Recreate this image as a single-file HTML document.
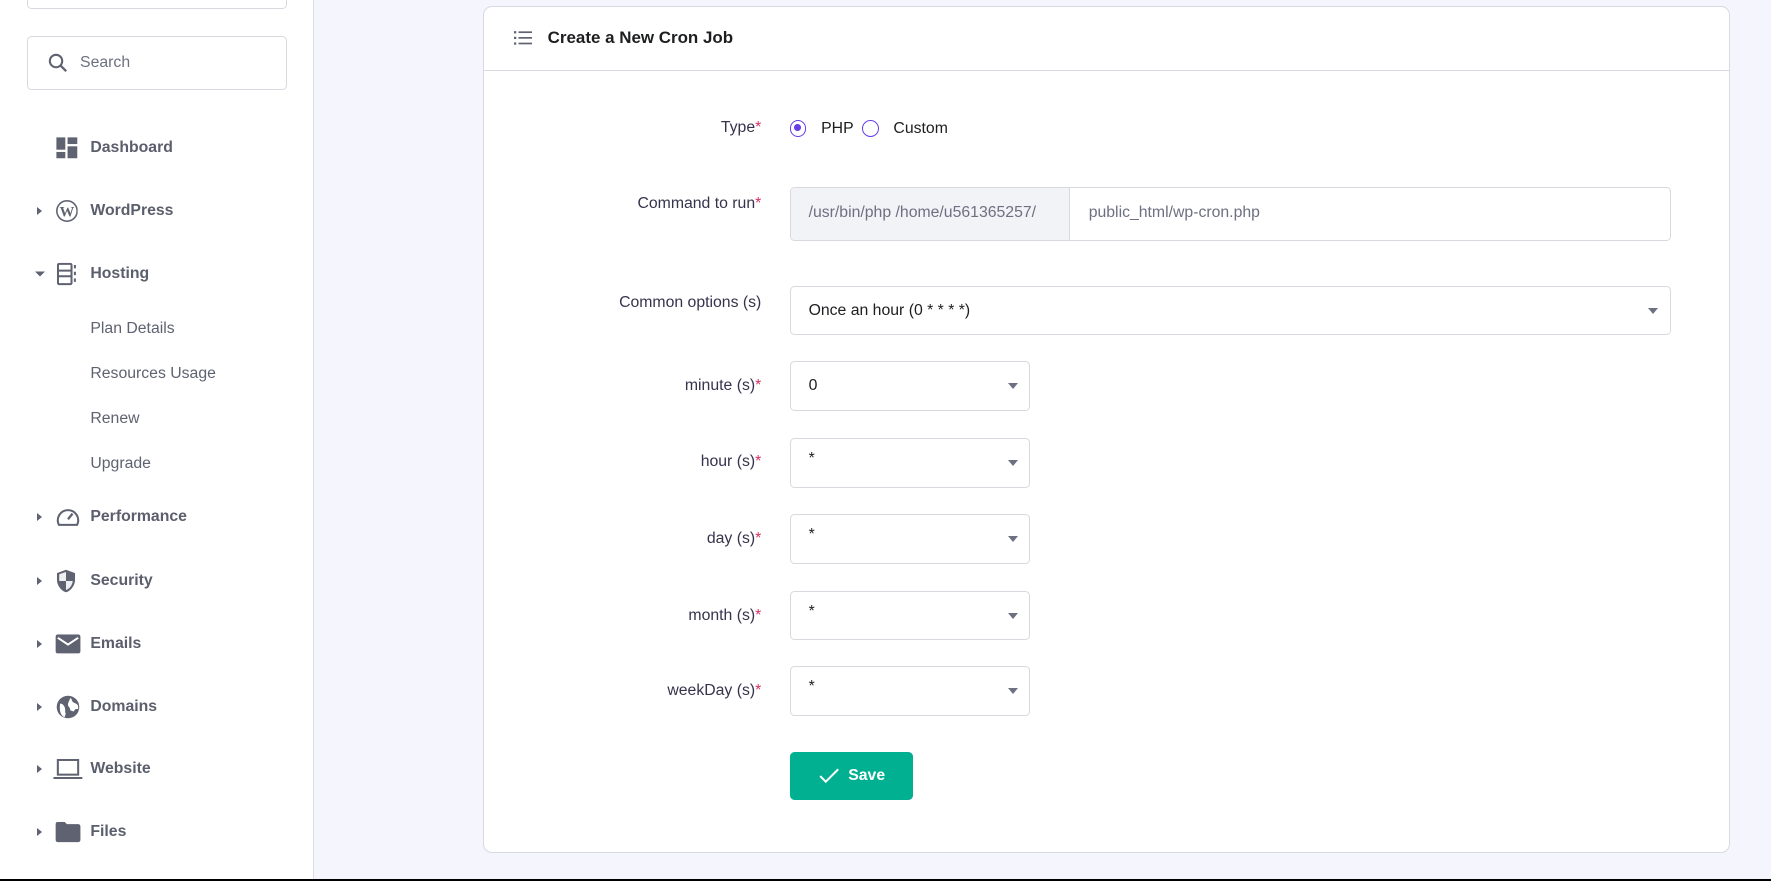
<!DOCTYPE html>
<html><head><meta charset="utf-8">
<style>
*{box-sizing:border-box;margin:0;padding:0}
html,body{width:1771px;height:881px;overflow:hidden;background:#f4f5fd}
#w{zoom:1.1295;width:1568px;height:780px;position:relative;font-family:"Liberation Sans",sans-serif;background:#f4f5fd;overflow:hidden}
.sb{position:absolute;left:0;top:0;width:278px;height:780px;background:#fff;border-right:1px solid #dcdce2}
.box{position:absolute;border:1px solid #d8d9de;border-radius:4px;background:#fff}
.nav{position:absolute;left:80px;font-size:14px;color:#5f6270;transform:translateY(-50%)}
.nav.b{font-weight:bold;color:#5b5e6c}
.ic{position:absolute;transform:translate(-50%,-50%)}
.ar{position:absolute;left:33px;width:0;height:0;border-top:4px solid transparent;border-bottom:4px solid transparent;border-left:5px solid #5f6270;transform:translateY(-50%)}
.ard{position:absolute;left:31px;width:0;height:0;border-left:4.5px solid transparent;border-right:4.5px solid transparent;border-top:5px solid #5f6270;transform:translateY(-50%)}
.card{position:absolute;left:428px;top:5px;width:1104px;height:750px;background:#fff;border:1px solid #d9dae0;border-radius:8px}
.hd{position:absolute;left:0;top:0;right:0;height:57px;border-bottom:1px solid #d9dae0}
.lbl{position:absolute;font-size:14px;color:#36344d;transform:translateY(-50%);white-space:nowrap}
.lbl i{font-style:normal;color:#d63163}
.in{position:absolute;border:1px solid #d8d9de;border-radius:4px;background:#fff;font-size:14px;color:#1d1e20}
.car{position:absolute;right:10px;top:50%;width:0;height:0;border-left:5px solid transparent;border-right:5px solid transparent;border-top:6px solid #6d7081;transform:translateY(-50%)}
.sel .t{position:absolute;left:16px;top:50%;transform:translateY(-50%)}
</style></head><body><div id="w">
<div class="sb">
  <div class="box" style="left:24px;top:-10px;width:230px;height:18px"></div>
  <div class="box" style="left:24px;top:32px;width:230px;height:48px">
    <svg style="position:absolute;left:17px;top:13px" width="20" height="20" viewBox="0 0 20 20"><circle cx="8" cy="8" r="5.5" fill="none" stroke="#5f6270" stroke-width="1.8"/><path d="M12 12l5 5" stroke="#5f6270" stroke-width="2"/></svg>
    <span style="position:absolute;left:46px;top:15px;font-size:14px;color:#6d7081">Search</span>
  </div>
  <svg class="ic" style="left:59px;top:131px" width="19" height="19" viewBox="0 0 19 19" fill="#5f6270"><rect x="0" y="0" width="8" height="11"/><rect x="10" y="0" width="9" height="6"/><rect x="0" y="13" width="8" height="6"/><rect x="10" y="8" width="9" height="11"/></svg>
  <div class="nav b" style="top:131px">Dashboard</div>
  <div class="ar" style="top:187px"></div>
  <svg class="ic" style="left:59px;top:187px" width="20" height="20" viewBox="0 0 20 20"><circle cx="10" cy="10" r="9" fill="none" stroke="#5f6270" stroke-width="1.4"/><text x="10" y="15" font-size="13" font-weight="bold" text-anchor="middle" fill="#5f6270" font-family="Liberation Serif">W</text></svg>
  <div class="nav b" style="top:187px">WordPress</div>
  <div class="ard" style="top:243px"></div>
  <svg class="ic" style="left:59px;top:243px" width="18" height="20" viewBox="0 0 18 20" fill="none" stroke="#5f6270" stroke-width="1.8"><rect x="1" y="1" width="12" height="18" rx="1"/><path d="M1 7h12M1 12h12M16 2v3M16 8v3M16 14v3"/></svg>
  <div class="nav b" style="top:243px">Hosting</div>
  <div class="nav" style="top:291px">Plan Details</div>
  <div class="nav" style="top:331px">Resources Usage</div>
  <div class="nav" style="top:371px">Renew</div>
  <div class="nav" style="top:411px">Upgrade</div>
  <div class="ar" style="top:458px"></div>
  <svg class="ic" style="left:60px;top:458px" width="22" height="18" viewBox="0 0 22 18" fill="none" stroke="#5f6270" stroke-width="1.8"><path d="M3 16A9 9 0 1 1 19 16z"/><path d="M11 11l4-5" stroke-width="2"/></svg>
  <div class="nav b" style="top:458px">Performance</div>
  <div class="ar" style="top:514px"></div>
  <svg class="ic" style="left:58px;top:514px" width="18" height="22" viewBox="0 0 18 22"><path d="M9 1L1 4v6c0 5 4 10 8 11 4-1 8-6 8-11V4z" fill="#5f6270"/><path d="M9 3v8H3V5zM9 11h6c-0.5 4-3 7-6 8z" fill="#fff" opacity=".9"/></svg>
  <div class="nav b" style="top:514px">Security</div>
  <div class="ar" style="top:570px"></div>
  <svg class="ic" style="left:60px;top:570px" width="22" height="17" viewBox="0 0 22 17"><rect width="22" height="17" rx="2" fill="#5f6270"/><path d="M2 3l9 6 9-6" fill="none" stroke="#fff" stroke-width="1.8"/></svg>
  <div class="nav b" style="top:570px">Emails</div>
  <div class="ar" style="top:626px"></div>
  <svg class="ic" style="left:60px;top:626px" width="22" height="22" viewBox="0 0 22 22"><circle cx="11" cy="11" r="10" fill="#5f6270"/><path d="M4 8c2 0 3 1 4 3s0 4 1 6l-1 3C5 19 3 15 4 8zM13 3c2 1 1 3 3 4s3 1 4 3v3c-2-1-3 0-4 2l-3-1c0-3-2-3-2-5s1-3 2-6z" fill="#fff"/></svg>
  <div class="nav b" style="top:626px">Domains</div>
  <div class="ar" style="top:681px"></div>
  <svg class="ic" style="left:60px;top:681px" width="26" height="18" viewBox="0 0 26 18" fill="none" stroke="#5f6270" stroke-width="1.8"><rect x="4" y="1" width="18" height="13"/><path d="M0 17h26"/></svg>
  <div class="nav b" style="top:681px">Website</div>
  <div class="ar" style="top:737px"></div>
  <svg class="ic" style="left:60px;top:737px" width="22" height="18" viewBox="0 0 22 18"><path d="M0 2a2 2 0 0 1 2-2h6l2 2h10a2 2 0 0 1 2 2v12a2 2 0 0 1-2 2H2a2 2 0 0 1-2-2z" fill="#5f6270"/></svg>
  <div class="nav b" style="top:737px">Files</div>
</div>

<div class="card">
  <div class="hd">
    <svg style="position:absolute;left:26px;top:21px" width="16" height="14" viewBox="0 0 16 14" fill="#5f6270"><rect x="0" y="1" width="2" height="2"/><rect x="4" y="1.2" width="12" height="1.5"/><rect x="0" y="6" width="2" height="2"/><rect x="4" y="6.2" width="12" height="1.5"/><rect x="0" y="11" width="2" height="2"/><rect x="4" y="11.2" width="12" height="1.5"/></svg>
    <span style="position:absolute;left:56px;top:19px;font-size:15px;font-weight:bold;color:#1d1e20">Create a New Cron Job</span>
  </div>
</div>
<div style="position:absolute;left:0;top:0;width:1532px;height:780px">
<div class="lbl" style="right:858px;top:113px">Type<i>*</i></div>
<div class="lbl" style="right:858px;top:181px">Command to run<i>*</i></div>
<div class="lbl" style="right:858px;top:268px">Common options (s)</div>
<div class="lbl" style="right:858px;top:342px">minute (s)<i>*</i></div>
<div class="lbl" style="right:858px;top:409px">hour (s)<i>*</i></div>
<div class="lbl" style="right:858px;top:477px">day (s)<i>*</i></div>
<div class="lbl" style="right:858px;top:545px">month (s)<i>*</i></div>
<div class="lbl" style="right:858px;top:612px">weekDay (s)<i>*</i></div>
</div>

<div style="position:absolute;left:699px;top:106px;width:15px;height:15px;border:1.5px solid #673de6;border-radius:50%"><div style="position:absolute;left:3px;top:3px;width:6px;height:6px;border-radius:50%;background:#673de6"></div></div>
<span style="position:absolute;left:727px;top:106px;font-size:14px;color:#1d1e20">PHP</span>
<div style="position:absolute;left:763px;top:106px;width:15px;height:15px;border:1.5px solid #673de6;border-radius:50%"></div>
<span style="position:absolute;left:791px;top:106px;font-size:14px;color:#1d1e20">Custom</span>

<div class="in" style="left:699px;top:166px;width:780px;height:47px;overflow:hidden">
  <div style="position:absolute;left:0;top:0;width:247px;height:100%;background:#f2f3f6;border-right:1px solid #d8d9de"></div>
  <span style="position:absolute;left:16px;top:14px;color:#6d7081">/usr/bin/php /home/u561365257/</span>
  <span style="position:absolute;left:264px;top:14px;color:#6d7081">public_html/wp-cron.php</span>
</div>
<div class="in sel" style="left:699px;top:253px;width:780px;height:44px"><span class="t">Once an hour (0 * * * *)</span><div class="car"></div></div>
<div class="in sel" style="left:699px;top:320px;width:213px;height:44px"><span class="t">0</span><div class="car"></div></div>
<div class="in sel" style="left:699px;top:388px;width:213px;height:44px"><span class="t" style="top:42%">*</span><div class="car"></div></div>
<div class="in sel" style="left:699px;top:455px;width:213px;height:44px"><span class="t" style="top:42%">*</span><div class="car"></div></div>
<div class="in sel" style="left:699px;top:523px;width:213px;height:44px"><span class="t" style="top:42%">*</span><div class="car"></div></div>
<div class="in sel" style="left:699px;top:590px;width:213px;height:44px"><span class="t" style="top:42%">*</span><div class="car"></div></div>

<div style="position:absolute;left:699px;top:666px;width:109px;height:42px;background:#00b090;border-radius:4px">
  <svg style="position:absolute;left:26px;top:13px" width="18" height="16" viewBox="0 0 18 16"><path d="M1 8l5 5L17 2" fill="none" stroke="#fff" stroke-width="1.8"/></svg>
  <span style="position:absolute;left:52px;top:13px;font-size:14px;font-weight:bold;color:#fff">Save</span>
</div>
<div style="position:absolute;left:0;top:778px;width:1568px;height:4px;background:#000"></div>
</div></body></html>
